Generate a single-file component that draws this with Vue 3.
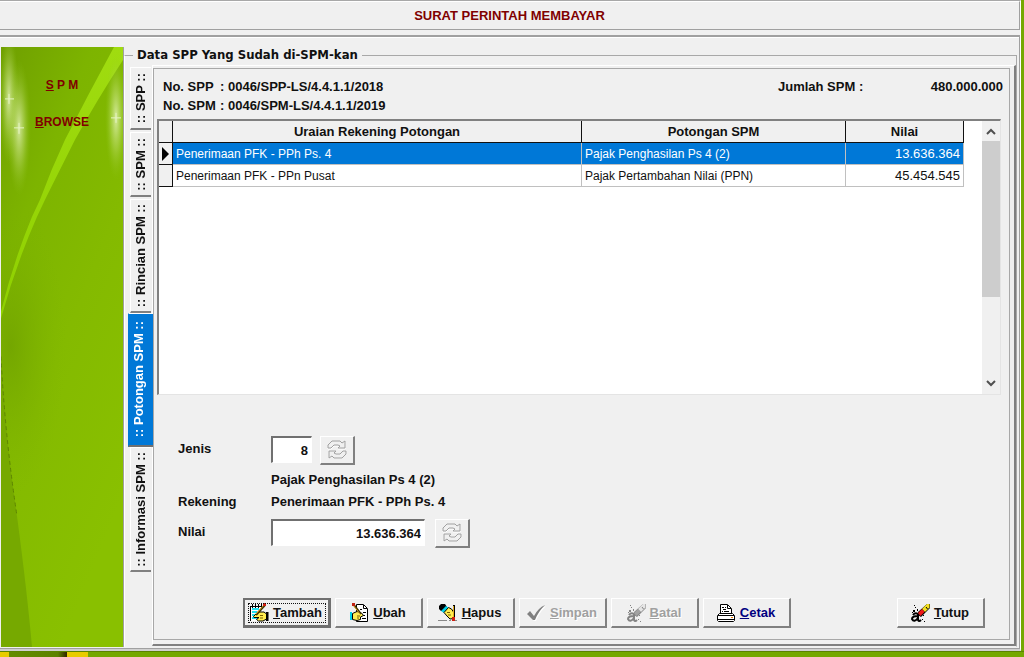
<script setup>
import { ref } from 'vue'

const menu = [
  { key: 'S', rest: ' P M' },
  { key: 'B', rest: 'ROWSE' }
]

const tabs = [
  { label: ':: SPP ::', size: 'xs' },
  { label: ':: SPM ::', size: 'sm' },
  { label: ':: Rincian SPM ::', size: 'md' },
  { label: ':: Potongan SPM ::', size: 'xl' },
  { label: ':: Informasi SPM ::', size: 'lg' }
]
const activeTab = ref(3)

const rows = [
  { uraian: 'Penerimaan PFK - PPh Ps. 4', potongan: 'Pajak Penghasilan Ps 4 (2)', nilai: '13.636.364' },
  { uraian: 'Penerimaan PFK - PPn Pusat', potongan: 'Pajak Pertambahan Nilai (PPN)', nilai: '45.454.545' }
]
const selected = ref(0)

const jenis = ref('8')
const nilai = ref('13.636.364')

const actions = [
  { icon: 'add', key: 'T', rest: 'ambah', focus: true },
  { icon: 'edit', key: 'U', rest: 'bah' },
  { icon: 'remove', key: 'H', rest: 'apus' },
  { icon: 'check', key: 'S', rest: 'impan', disabled: true },
  { icon: 'erase', key: 'B', rest: 'atal', disabled: true },
  { icon: 'print', key: 'C', rest: 'etak', link: true },
  { icon: 'erase', key: 'T', rest: 'utup', last: true }
]
</script>

<template>
  <div class="desktop">
    <main class="window">
      <h1 class="title">SURAT PERINTAH MEMBAYAR</h1>
      <div class="body">
        <nav class="side">
          <svg class="art" viewBox="0 0 122 601" preserveAspectRatio="none" aria-hidden="true">
            <defs>
              <linearGradient id="base" x1="0" y1="0" x2="0.5" y2="1">
                <stop offset="0" stop-color="#6f9f00" />
                <stop offset="0.3" stop-color="#7db400" />
                <stop offset="0.6" stop-color="#84ba00" />
                <stop offset="1" stop-color="#89c000" />
              </linearGradient>
              <linearGradient id="ray" x1="0" y1="0" x2="0" y2="1">
                <stop offset="0" stop-color="#a0dc10" />
                <stop offset="1" stop-color="#8fd000" />
              </linearGradient>
              <radialGradient id="shade">
                <stop offset="0" stop-color="#6c9c00" stop-opacity="0.6" />
                <stop offset="1" stop-color="#7db400" stop-opacity="0" />
              </radialGradient>
              <radialGradient id="glow">
                <stop offset="0" stop-color="#e4f3b8" stop-opacity="0.85" />
                <stop offset="0.5" stop-color="#c8e480" stop-opacity="0.4" />
                <stop offset="1" stop-color="#90c820" stop-opacity="0" />
              </radialGradient>
            </defs>
            <rect width="122" height="601" fill="url(#base)" />
            <ellipse cx="10" cy="300" rx="55" ry="150" fill="url(#shade)" />
            <path d="M113 0H122V13Q96 53 74 93Q56 129 44 153L36 170Q14 220 0 272V265Q12 216 31 170L39 153Q50 123 64 93Q88 46 113 0Z" fill="url(#ray)" />
            <path d="M0 310Q4 390 16 470Q26 545 31 601H0Z" fill="#76a900" />
            <path d="M0 310Q4 390 16 470" fill="none" stroke="#5d8600" stroke-dasharray="4 3" />
            <ellipse cx="8" cy="52" rx="10" ry="66" fill="url(#glow)" />
            <ellipse cx="18" cy="81" rx="12" ry="68" fill="url(#glow)" />
            <ellipse cx="115" cy="71" rx="11" ry="62" fill="url(#glow)" />
            <path d="M4 52H13M8 47V57M13 81H23M18 76V87M110 71H120M115 66V76" stroke="#e6f5c4" />
          </svg>
          <a v-for="item in menu" :key="item.key" href="#" class="menu-link"><u>{{ item.key }}</u>{{ item.rest }}</a>
        </nav>

        <fieldset class="group">
          <legend>Data SPP Yang Sudah di-SPM-kan</legend>
          <div class="tabs" role="tablist">
            <button
              v-for="(tab, i) in tabs"
              :key="tab.label"
              type="button"
              role="tab"
              class="tab"
              :class="[tab.size, { active: i === activeTab }]"
              :aria-selected="i === activeTab"
              @click="activeTab = i"
            ><span>{{ tab.label }}</span></button>
          </div>

          <div class="frame">
            <section class="page">
              <div class="info">
                <dl>
                  <dt>No. SPP</dt><dd>: 0046/SPP-LS/4.4.1.1/2018</dd>
                  <dt>No. SPM</dt><dd>: 0046/SPM-LS/4.4.1.1/2019</dd>
                </dl>
                <p class="total"><span>Jumlah SPM :</span><span>480.000.000</span></p>
              </div>

              <div class="grid">
                <div class="grid-area">
                  <table>
                    <colgroup>
                      <col class="c-mark"><col class="c-uraian"><col class="c-potongan"><col class="c-nilai">
                    </colgroup>
                    <thead>
                      <tr><th></th><th>Uraian Rekening Potongan</th><th>Potongan SPM</th><th>Nilai</th></tr>
                    </thead>
                    <tbody>
                      <tr v-for="(row, i) in rows" :key="row.uraian" :class="{ selected: i === selected }" @click="selected = i">
                        <th scope="row">
                          <svg v-if="i === selected" class="marker" viewBox="0 0 7 14"><path d="M0 0L7 7L0 14Z" /></svg>
                        </th>
                        <td>{{ row.uraian }}</td>
                        <td>{{ row.potongan }}</td>
                        <td class="num">{{ row.nilai }}</td>
                      </tr>
                    </tbody>
                  </table>
                </div>
                <div class="scroll" aria-hidden="true">
                  <svg viewBox="0 0 10 7"><path d="M1 6L5 2L9 6" /></svg>
                  <div class="track"><div class="thumb"></div></div>
                  <svg viewBox="0 0 10 7"><path d="M1 1L5 5L9 1" /></svg>
                </div>
              </div>

              <form class="form" @submit.prevent>
                <label for="jenis">Jenis</label>
                <div class="field">
                  <input id="jenis" v-model="jenis" class="short" type="text">
                  <button type="button" class="reload" aria-label="Pilih jenis">
                    <svg viewBox="0 0 22 22"><path class="hi" d="M2 10V7L6 3H14L16 5L19 3V10H12L14 8L12 7H8L5 10ZM20 12V15L16 19H8L6 17L3 19V12H10L8 14L10 15H14L17 12Z" /><path d="M2 9V6L6 2H14L16 4L19 2V9H12L14 7L12 6H8L5 9ZM20 12V15L16 19H8L6 17L3 19V12H10L8 14L10 15H14L17 12Z" /></svg>
                  </button>
                </div>
                <output class="second">Pajak Penghasilan Ps 4 (2)</output>
                <span class="rekening">Rekening</span>
                <output>Penerimaan PFK - PPh Ps. 4</output>
                <label for="nilai">Nilai</label>
                <div class="field">
                  <input id="nilai" v-model="nilai" class="long" type="text">
                  <button type="button" class="reload" aria-label="Hitung nilai">
                    <svg viewBox="0 0 22 22"><path class="hi" d="M2 10V7L6 3H14L16 5L19 3V10H12L14 8L12 7H8L5 10ZM20 12V15L16 19H8L6 17L3 19V12H10L8 14L10 15H14L17 12Z" /><path d="M2 9V6L6 2H14L16 4L19 2V9H12L14 7L12 6H8L5 9ZM20 12V15L16 19H8L6 17L3 19V12H10L8 14L10 15H14L17 12Z" /></svg>
                  </button>
                </div>
              </form>

              <div class="actions">
                <button
                  v-for="a in actions"
                  :key="a.icon + a.rest"
                  type="button"
                  class="btn"
                  :class="{ focus: a.focus, link: a.link, last: a.last }"
                  :disabled="a.disabled"
                >
                  <svg v-if="a.icon === 'add'" class="icon" viewBox="0 0 20 20">
                    <path fill="#fff" d="M2 3H14V18H2Z" />
                    <path stroke="#20e0f0" stroke-width="2" d="M3 6H10M3 9H8M3 12H7M3 15H8" />
                    <path fill="none" stroke="#000" d="M1.500 3V18M2 3.500H14" />
                    <path stroke="#000" d="M3.500 1V5M6.500 1V5M9.500 1V5M12.500 1V5" />
                    <path fill="#000" d="M17 9H19.500V18H17Z" />
                    <path fill="#ffec50" stroke="#000" d="M4.500 13.500L9 9L15 9L17.500 11V16L14 18H9.500L7.500 16.500L10 14.500H5Z" />
                    <path stroke="#7a6000" d="M11 12.500H14M11 15H14" />
                    <path stroke="#3c3000" stroke-width="2" d="M16 2L7 12" />
                    <path stroke="#d8a020" d="M15 2L7 11" />
                    <path fill="#d02010" d="M14 0H17V3H14Z" />
                  </svg>
                  <svg v-else-if="a.icon === 'edit'" class="icon" viewBox="0 0 20 20">
                    <path fill="#fff" stroke="#000" d="M7.500 1.500H14.500L18.500 5.500V18.500H7.500Z" />
                    <path fill="none" stroke="#000" d="M14.500 2V5.500H18M11 6.500H13M14 9.500H17M14 12.500H16M13 15.500H17" />
                    <path fill="#00d0e8" d="M1 9H3V17H1Z" />
                    <path fill="#ffec50" stroke="#000" d="M3.500 10.500L8 8.500L12.500 10L14.500 12.500L11.500 14V16.500L8 17.500L3.500 16.500Z" />
                    <path stroke="#7a6000" d="M8 13H11M8 15H10" />
                    <path stroke="#3c3000" stroke-width="2" d="M5 2L12 11" />
                    <path stroke="#d8a020" d="M4 2L11 11" />
                    <path fill="#c02010" d="M3 0H6V3H3Z" />
                  </svg>
                  <svg v-else-if="a.icon === 'remove'" class="icon" viewBox="0 0 20 20">
                    <path fill="#000" d="M3 1H7L9 4L6 8H3L1 6V3Z" />
                    <path fill="#00d0e8" d="M8 3L11 5L6 10L3 8Z" />
                    <path fill="#ffec50" stroke="#000" d="M10.500 4.500L13.500 6L15.500 9V15.500L12 16L9 13L6 9.500Z" />
                    <path stroke="#7a6000" d="M9 9.500H12M10 12H13" />
                    <path stroke="#000" stroke-width="2" d="M16 2V16" />
                    <path stroke="#e8b020" d="M15.500 3V14" />
                    <path fill="#d02010" d="M14 14H17V18H14Z" />
                    <path stroke="#888" d="M0 17.500H9M11 17.500H13M17 17.500H19" />
                  </svg>
                  <svg v-else-if="a.icon === 'check'" class="icon" viewBox="0 0 20 20">
                    <path fill="#fff" d="M2 12L5 9L9 14Q13 6 20 3Q13 10 10 18H8Z" />
                    <path fill="#808080" d="M1 11L4 8L8 13Q12 5 19 2Q12 9 9 17H7Z" />
                  </svg>
                  <svg v-else-if="a.icon === 'erase'" class="icon" :class="{ gray: a.disabled }" viewBox="0 0 20 20">
                    <path fill="none" stroke="#000" stroke-width="2" d="M3 12Q5 9 8 11V17Q9 19 11 17M8 13Q2 13 2 16Q4 20 8 15" />
                    <path fill="#000" d="M3 7H5V9H3ZM5 4H6V5H5ZM2 9H3V10H2ZM7 6H8V8H7ZM12 16H13V17H12ZM13 12H14V13H13ZM14 18H15V19H14ZM4 2H5V3H4Z" />
                    <path fill="#000" d="M8 9L17 1H20V5L11 14L8 12Z" />
                    <path fill="#f4e020" d="M12 6L17 1H19.500V4.500L15 9Z" />
                    <path fill="#f01818" d="M8 10L12 6L14.500 9L10.500 13Z" />
                    <path stroke="#000" d="M16 4L17.500 6" />
                  </svg>
                  <svg v-else class="icon" viewBox="0 0 20 20">
                    <path fill="#fff" stroke="#000" d="M4.500 10.500V1.500H11.500L15.500 5.500V10.500Z" />
                    <path fill="none" stroke="#000" d="M11.500 2V5.500H15M6 4.500H8M9 4.500H10M7 6.500H10M6 8.500H7M8 8.500H13" />
                    <path fill="#fff" stroke="#000" d="M3.500 10.500H16.500L18.500 12.500V17.500L17.500 18.500H2.500L1.500 17.500V12.500Z" />
                    <path stroke="#000" d="M2 12.500H18M2 16.500H18" />
                    <path stroke="#f08000" d="M15 14.500H17" />
                  </svg>
                  <span><u>{{ a.key }}</u>{{ a.rest }}</span>
                </button>
              </div>
            </section>
          </div>
        </fieldset>
      </div>
    </main>
    <div class="strip" aria-hidden="true"></div>
  </div>
</template>

<style>
body {
  margin: 0;
}
</style>

<style scoped>
* {
  box-sizing: border-box;
}

.desktop {
  display: flex;
  flex-direction: column;
  min-height: 100vh;
  padding-right: 3px;
  background: #74a800;
  font: bold 13px/19px "Liberation Sans", Arial, sans-serif;
  color: #111;
}

.window {
  flex: 1;
  display: flex;
  flex-direction: column;
  background: #f0f0f0;
  border-top: 1px solid #a8a8a8;
  border-right: 1px solid #fff;
  border-bottom: 2px solid #d0d0d0;
}

.strip {
  height: 6px;
  margin-right: -3px;
  background: linear-gradient(90deg, #e8cc00 9px, #648c00 9px, #5c8200 58px, #302400 67px, #e8cc00 67px, #e8cc00 88px, transparent 88px);
  border-top: 1px solid #5a8400;
}

.title {
  margin: 0;
  padding: 6px 0;
  border-top: 1px solid #fff;
  border-right: 1px solid #a0a0a0;
  border-bottom: 1px solid #a0a0a0;
  font-size: 13px;
  line-height: 15px;
  text-align: center;
  color: #800000;
}

.body {
  flex: 1;
  display: flex;
  margin-top: 5px;
  padding: 10px 2px 1px 1px;
  border: solid #a0a0a0;
  border-width: 2px 1px 1px 0;
  box-shadow: inset 0 1px #fff;
}

.side {
  position: relative;
  width: 123px;
  display: flex;
  flex-direction: column;
  align-items: center;
  gap: 18px;
  padding-top: 29px;
  border-right: 1px solid #a0a0a0;
}

.art {
  position: absolute;
  inset: 0;
  width: 100%;
  height: 100%;
}

.menu-link {
  position: relative;
  font-size: 12px;
  color: #800000;
  text-decoration: none;
}

.group {
  flex: 1;
  min-width: 0;
  display: flex;
  margin: 0;
  padding: 2px 0 0 4px;
  border: 1px solid #a8a8a8;
  border-left-color: #fff;
  border-bottom-color: #f0f0f0;
}

legend {
  margin-left: 4px;
  padding: 0 4px;
  font: bold 13px/16px "DejaVu Sans Condensed", "DejaVu Sans", sans-serif;
}

.tabs {
  width: 23px;
  display: flex;
  flex-direction: column;
  gap: 2px;
  padding: 2px 0 0 1px;
}

.tab {
  display: flex;
  align-items: center;
  justify-content: center;
  width: 21px;
  padding: 0 2px 0 0;
  border: solid;
  border-width: 1px 0 2px 1px;
  border-color: #fff #fff #808080;
  background: #f0f0f0;
  color: #111;
  font: inherit;
}

.tab span {
  writing-mode: vertical-rl;
  transform: rotate(180deg);
  white-space: nowrap;
}

.tab.xs { height: 63px; }
.tab.sm { height: 65px; }
.tab.md { height: 114px; }
.tab.lg { height: 125px; }
.tab.xl { height: 134px; }

.tab.active {
  width: 25px;
  margin: -2px 0 -2px -2px;
  padding-right: 5px;
  border-color: #fff #fff #707070 #0078d7;
  background: #0078d7;
  color: #fff;
  z-index: 1;
}

.frame {
  flex: 1;
  min-width: 0;
  display: flex;
  padding: 2px 4px 4px 0;
  border: solid;
  border-width: 1px 2px 2px 1px;
  border-color: #fff #808080 #808080 #fff;
}

.page {
  flex: 1;
  min-width: 0;
  display: flex;
  flex-direction: column;
  border: 1px solid #a8a8a8;
  padding: 8px 6px 11px 3px;
}

.info {
  display: flex;
  justify-content: space-between;
  padding: 0 0 4px 6px;
}

dl {
  display: grid;
  grid-template-columns: 57px auto;
  margin: 0;
}

dd {
  margin: 0;
}

.total {
  display: flex;
  justify-content: space-between;
  width: 225px;
  margin: 0;
}

.grid {
  flex: 1;
  min-height: 200px;
  display: flex;
  margin-right: 2px;
  background: #fff;
  border: 2px solid #808080;
  border-right: 1px solid #e4e4e4;
  border-bottom: 1px solid #e4e4e4;
}

.grid-area {
  flex: 1;
  min-width: 0;
  padding-right: 18px;
}

table {
  width: 100%;
  table-layout: fixed;
  border-collapse: separate;
  border-spacing: 0;
}

.c-mark { width: 14px; }
.c-potongan { width: 264px; }
.c-nilai { width: 118px; }

th,
td {
  height: 22px;
  padding: 0 3px;
  border: 1px solid #c0c0c0;
  border-width: 0 1px 1px 0;
  font-size: 12px;
  line-height: 20px;
  font-weight: normal;
  text-align: left;
  white-space: nowrap;
}

th {
  border-color: #111;
  background: #f0f0f0;
}

thead th {
  font-size: 13px;
  font-weight: bold;
  text-align: center;
}

tbody th {
  padding: 0 0 0 3px;
}

.num {
  font-size: 13px;
  text-align: right;
}

.selected td {
  background: #0078d7;
  color: #fff;
}

.marker {
  display: block;
  width: 7px;
  height: 14px;
}

.scroll {
  width: 18px;
  display: flex;
  flex-direction: column;
  align-items: center;
  background: #f0f0f0;
  padding: 7px 0;
}

.scroll svg {
  width: 10px;
  height: 7px;
  fill: none;
  stroke: #505050;
  stroke-width: 2;
}

.track {
  flex: 1;
  width: 100%;
  padding: 6px 0;
}

.thumb {
  height: 67%;
  background: #cdcdcd;
}

.form {
  display: grid;
  grid-template-columns: 93px 1fr;
  padding: 41px 0 44px 21px;
  align-items: start;
}

.form > * {
  min-height: 22px;
}

.form > label {
  padding-top: 3px;
}

.form > .rekening {
  min-height: 27px;
}

.second {
  grid-column: 2;
}

.field {
  display: flex;
  align-items: flex-start;
  gap: 8px;
  padding-bottom: 5px;
}

.field input {
  height: 27px;
  padding: 0 3px;
  border: solid;
  border-width: 2px 1px 1px 2px;
  border-color: #707070 #fff #fff #707070;
  background: #fff;
  color: #111;
  font: inherit;
  text-align: right;
}

.field .short { width: 41px; }
.field .long { width: 154px; margin-right: 2px; }

.reload,
.btn {
  display: flex;
  align-items: center;
  justify-content: center;
  padding: 0;
  border: solid;
  border-width: 1px 2px 2px 1px;
  border-color: #fff #808080 #808080 #fff;
  background: #f0f0f0;
  color: #111;
  font: inherit;
}

.reload {
  width: 35px;
  height: 29px;
}

.reload svg {
  width: 22px;
  height: 22px;
  fill: #f0f0f0;
  stroke: #a0a0a0;
}

.reload .hi {
  stroke: #fff;
}

.actions {
  display: flex;
  gap: 4px;
  padding: 1px 18px 0 86px;
}

.btn {
  width: 88px;
  height: 30px;
  gap: 4px;
  padding-right: 2px;
}

.btn.last {
  margin-left: auto;
}

.btn.focus {
  border-width: 2px 3px 3px 2px;
  border-color: #707070;
  outline: 1px dotted #111;
  outline-offset: -6px;
}

.btn.link {
  color: #000080;
}

.btn:disabled {
  color: #a0a0a0;
  text-shadow: 1px 1px #fff;
}

.icon {
  width: 20px;
  height: 20px;
}

.gray {
  filter: grayscale(1);
  opacity: 0.45;
}
</style>
